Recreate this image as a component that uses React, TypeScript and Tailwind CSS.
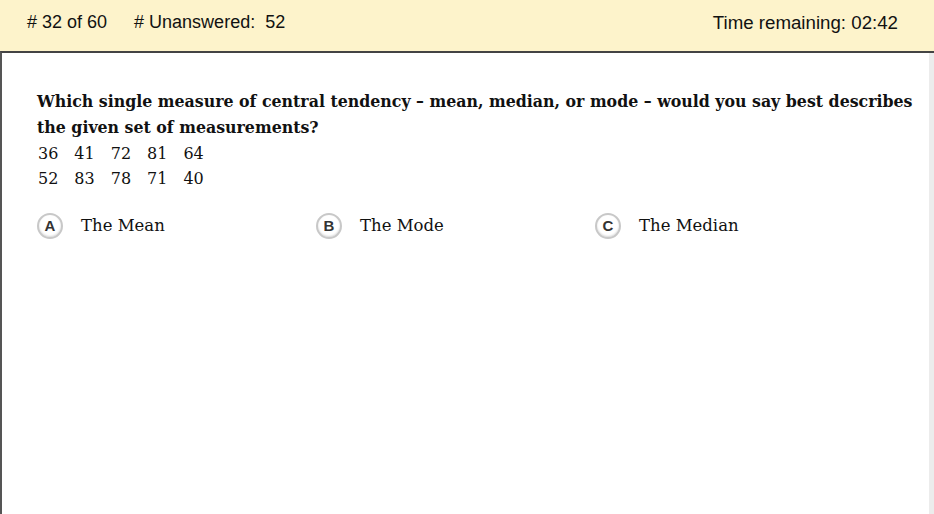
import React from "react";

const choices = [
  { key: "A", label: "The Mean" },
  { key: "B", label: "The Mode" },
  { key: "C", label: "The Median" },
];

const rows = [
  ["36", "41", "72", "81", "64"],
  ["52", "83", "78", "71", "40"],
];

export default function App() {
  return (
    <div className="flex h-[514px] w-[934px] flex-col overflow-hidden bg-white">
      {/* Status bar */}
      <div className="flex h-[51px] shrink-0 items-start justify-between bg-[#fdf3cb] pl-[27px] pr-[36px] pt-[9px] font-['Liberation_Sans',Arial,sans-serif] text-[18px] text-[#111]">
        <div className="flex items-center gap-[27px]">
          <span># 32 of 60</span>
          <span># Unanswered:&nbsp;&nbsp;52</span>
        </div>
        <span className="text-[18.7px]">Time remaining: 02:42</span>
      </div>

      {/* Question area */}
      <div className="flex min-h-0 flex-1 border-t-2 border-l-2 border-[#555] border-t-[#444]">
        <div className="flex-1 pl-[35px] pt-[36px] font-['DejaVu_Serif',serif] text-[#111]">
          <p className="w-[890px] text-[15.8px] font-bold leading-[26px]">
            Which single measure of central tendency – mean, median, or mode – would you say best describes the given set of measurements?
          </p>
          <div className="text-[16px] leading-[25px]">
            {rows.map((r, i) => (
              <div key={i} className="flex gap-[16px] pl-[1px]">
                {r.map((n, j) => (
                  <span key={j}>{n}</span>
                ))}
              </div>
            ))}
          </div>

          <div className="mt-[22px] flex">
            {choices.map((c) => (
              <div key={c.key} className="flex w-[279px] items-center gap-[18px]">
                <span className="flex h-[26px] w-[26px] items-center justify-center rounded-full border-2 border-[#c8c8c8] bg-white font-['Liberation_Sans',Arial,sans-serif] text-[15px] font-bold text-[#333] shadow-[inset_0_-1px_2px_rgba(0,0,0,0.15)]">
                  {c.key}
                </span>
                <span className="text-[16.5px]">{c.label}</span>
              </div>
            ))}
          </div>
        </div>
        <div className="w-[5px] shrink-0 bg-[#ececec]" />
      </div>
    </div>
  );
}
